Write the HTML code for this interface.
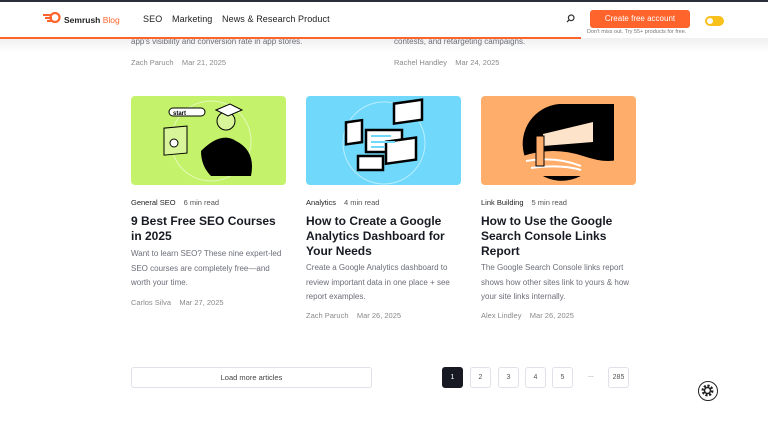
<!DOCTYPE html>
<html><head><style>
*{margin:0;padding:0;box-sizing:border-box}
body{width:768px;height:432px;overflow:hidden;background:#fff;font-family:"Liberation Sans",sans-serif;position:relative}
.topbar{position:absolute;top:0;left:0;width:768px;height:2px;background:#2a2d3a;z-index:5}
.hdr{position:absolute;top:2px;left:0;width:768px;height:36px;background:#fff;z-index:2}
.oline{position:absolute;top:37px;left:0;width:581px;height:2px;background:#ff642d;z-index:3}
.shadow{position:absolute;top:38px;left:0;width:768px;height:14px;background:linear-gradient(#efefef,#fff);z-index:1}
.t{position:absolute;white-space:nowrap;z-index:2}
.nav{font-size:9px;color:#222;top:12px;letter-spacing:0.1px}
.meta{font-size:7.5px;color:#8a8a8a}
.img{position:absolute;top:96px;width:155px;height:89px;border-radius:4px}
.cat{font-size:7.5px;color:#222}
.cat b{font-weight:normal;color:#555;margin-left:8px}
.title{font-size:12px;font-weight:bold;color:#171a22;line-height:15px;white-space:normal;width:150px}
.desc{font-size:8px;color:#6c6e79;line-height:14.5px;white-space:normal;width:155px}
.pg{position:absolute;top:367px;width:21px;height:21px;border:1px solid #e0e1e9;border-radius:3px;font-size:7px;color:#555;text-align:center;line-height:19px}
</style></head><body>
<div class="topbar"></div>
<div class="hdr">
 <svg style="position:absolute;left:43px;top:10px" width="18" height="11" viewBox="0 0 18 11"><circle cx="12" cy="5.5" r="4.5" fill="none" stroke="#ff642d" stroke-width="2.2"/><path d="M0 3h8M2 6h7M4 9h5" stroke="#ff642d" stroke-width="2"/></svg>
 <div class="t" style="left:64px;top:13px;font-size:8.5px;font-weight:bold;color:#222">Semrush <span style="color:#ff642d;font-weight:normal">Blog</span></div>
 <div class="t nav" style="left:143px">SEO</div>
 <div class="t nav" style="left:172px">Marketing</div>
 <div class="t nav" style="left:222px">News &amp; Research</div>
 <div class="t nav" style="left:298px">Product</div>
 <svg style="position:absolute;left:566px;top:12px" width="9" height="9" viewBox="0 0 9 9"><circle cx="5.2" cy="3.8" r="2.8" fill="none" stroke="#333" stroke-width="1.2"/><path d="M3.2 5.8L1 8" stroke="#333" stroke-width="1.3"/></svg>
 <div class="t" style="left:590px;top:8px;width:100px;height:18px;background:#ff642d;border-radius:3px;color:#fff;font-size:8px;text-align:center;line-height:18px">Create free account</div>
 <div class="t" style="left:587px;top:27px;font-size:5.5px;color:#777">Don't miss out. Try 55+ products for free.</div>
 <div class="t" style="left:705px;top:14px;width:19px;height:10px;background:#f8c01c;border-radius:5px"><div style="position:absolute;left:2px;top:2px;width:6px;height:6px;border-radius:3px;background:#fff"></div></div>
</div>
<div class="oline"></div>
<div class="shadow"></div>
<div class="t desc" style="left:131px;top:35px;width:300px">app's visibility and conversion rate in app stores.</div>
<div class="t desc" style="left:394px;top:35px;width:300px">contests, and retargeting campaigns.</div>
<div class="t meta" style="left:131px;top:58px">Zach Paruch&nbsp;&nbsp;&nbsp;&nbsp;Mar 21, 2025</div>
<div class="t meta" style="left:394px;top:58px">Rachel Handley&nbsp;&nbsp;&nbsp;&nbsp;Mar 24, 2025</div>

<div class="img" style="left:131px;background:#c4f26a">
 <svg width="155" height="89" viewBox="0 0 155 89"><circle cx="80" cy="45" r="40" fill="none" stroke="#e4f9b8" stroke-width="1"/><rect x="38" y="12" width="36" height="8" rx="4" fill="#fff" stroke="#000"/><text x="42" y="19" font-size="6" font-family="Liberation Sans" font-weight="bold">start</text><rect x="33" y="35" width="23" height="27" fill="#d9f59a" stroke="#000" transform="skewY(-5)"/><circle cx="43" cy="47" r="4" fill="#fff" stroke="#000"/><path d="M70 55q20-20 35-10q20 10 15 35h-40q-10-10-10-25z" fill="#000"/><circle cx="95" cy="25" r="9" fill="#d9f59a" stroke="#000"/><path d="M85 14l14-6 12 6-14 6z" fill="#fff" stroke="#000"/></svg>
</div>
<div class="img" style="left:306px;background:#6fd8fb">
 <svg width="155" height="89" viewBox="0 0 155 89"><circle cx="78" cy="47" r="41" fill="none" stroke="#b8edff"/><g fill="#fff" stroke="#000" stroke-width="2.5"><rect x="40" y="32" width="16" height="22" transform="skewY(-8)"/><rect x="60" y="34" width="36" height="22"/><rect x="88" y="20" width="28" height="20" transform="skewY(-8)"/><rect x="52" y="60" width="25" height="14"/><rect x="80" y="57" width="30" height="22" transform="skewY(-8)"/></g><path d="M65 40h20M65 46h24M65 51h14" stroke="#6fd8fb" stroke-width="2"/></svg>
</div>
<div class="img" style="left:481px;background:#ffad6b">
 <svg width="155" height="89" viewBox="0 0 155 89"><path d="M78 8h55v70h-30a40 40 0 0 1-60-20 40 40 0 0 1 35-50z" fill="#000"/><path d="M42 60q30-10 60 0t40 0v20h-97z" fill="#ffad6b"/><path d="M45 65q30-5 55 5M50 72q30-4 50 2" stroke="#fff" fill="none" stroke-width="2"/><path d="M62 38l50-12v20l-50 4z" fill="#fde3c9"/><rect x="55" y="40" width="8" height="30" fill="#ffad6b" stroke="#000"/></svg>
</div>

<div class="t cat" style="left:131px;top:198px">General SEO<b>6 min read</b></div>
<div class="t cat" style="left:306px;top:198px">Analytics<b>4 min read</b></div>
<div class="t cat" style="left:481px;top:198px">Link Building<b>5 min read</b></div>

<div class="t title" style="left:131px;top:214px">9 Best Free SEO Courses in 2025</div>
<div class="t title" style="left:306px;top:214px">How to Create a Google Analytics Dashboard for Your Needs</div>
<div class="t title" style="left:481px;top:214px">How to Use the Google Search Console Links Report</div>

<div class="t desc" style="left:131px;top:247px;width:160px">Want to learn SEO? These nine expert-led SEO courses are completely free—and worth your time.</div>
<div class="t desc" style="left:306px;top:261px">Create a Google Analytics dashboard to review important data in one place + see report examples.</div>
<div class="t desc" style="left:481px;top:261px;width:160px">The Google Search Console links report shows how other sites link to yours &amp; how your site links internally.</div>

<div class="t meta" style="left:131px;top:298px">Carlos Silva&nbsp;&nbsp;&nbsp;&nbsp;Mar 27, 2025</div>
<div class="t meta" style="left:306px;top:311px">Zach Paruch&nbsp;&nbsp;&nbsp;&nbsp;Mar 26, 2025</div>
<div class="t meta" style="left:481px;top:311px">Alex Lindley&nbsp;&nbsp;&nbsp;&nbsp;Mar 26, 2025</div>

<div class="t" style="left:131px;top:367px;width:241px;height:21px;border:1px solid #e0e1e9;border-radius:3px;font-size:7.5px;color:#444;text-align:center;line-height:19px">Load more articles</div>
<div class="pg" style="left:442px;background:#171a22;color:#fff;border-color:#171a22">1</div>
<div class="pg" style="left:470px">2</div>
<div class="pg" style="left:498px">3</div>
<div class="pg" style="left:525px">4</div>
<div class="pg" style="left:552px">5</div>
<div class="t" style="left:588px;top:372px;font-size:7px;color:#777">...</div>
<div class="pg" style="left:608px">285</div>
<div class="t" style="left:698px;top:381px;width:20px;height:20px;border:1.5px solid #222;border-radius:50%;background:#fff">
 <svg width="17" height="17" viewBox="0 0 17 17"><circle cx="8.5" cy="8.5" r="4.5" fill="none" stroke="#222" stroke-width="3" stroke-dasharray="2 1.5"/><circle cx="8.5" cy="8.5" r="3" fill="none" stroke="#222" stroke-width="1.5"/></svg>
</div>
</body></html>
